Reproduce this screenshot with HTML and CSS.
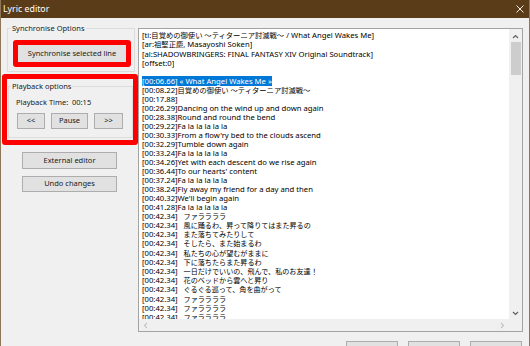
FILE: index.html
```html
<!DOCTYPE html>
<html>
<head>
<meta charset="utf-8">
<link rel="stylesheet" href="styles.css">
</head>
<body>
<div class="window">
  <div class="titlebar">
    <span class="title">Lyric editor</span>
    <svg class="close" width="8" height="8" viewBox="0 0 8 8"><path d="M0.5 0.5L7.5 7.5M7.5 0.5L0.5 7.5" stroke="#fff" stroke-width="0.9" fill="none"/></svg>
  </div>
  <div class="body">
    <div class="main">
      <div class="left">
        <fieldset class="group sync">
          <legend>Synchronise Options</legend>
          <button class="btn sync-btn">Synchronise selected line</button>
        </fieldset>
        <fieldset class="group playback">
          <legend>Playback options</legend>
          <div class="time"><span class="time-label">Playback Time:</span><span>00:15</span></div>
          <div class="controls">
            <button class="btn prev">&lt;&lt;</button>
            <button class="btn pause">Pause</button>
            <button class="btn next">&gt;&gt;</button>
          </div>
        </fieldset>
        <button class="btn wide ext">External editor</button>
        <button class="btn wide undo">Undo changes</button>
        <div class="mark mark1"></div>
        <div class="mark mark2"></div>
      </div>
      <div class="editor">
        <div class="text">
          <div class="ln cjk">[ti:<span class="cj">目覚めの御使い ～ティターニア討滅戦～</span> / What Angel Wakes Me]</div>
          <div class="ln cjk">[ar:<span class="cj">祖堅正慶</span>, Masayoshi Soken]</div>
          <div class="ln">[al:SHADOWBRINGERS: FINAL FANTASY XIV Original Soundtrack]</div>
          <div class="ln">[offset:0]</div>
          <div class="ln">&nbsp;</div>
          <div class="ln"><span class="sel">[00:06.66] « What Angel Wakes Me »</span></div>
          <div class="ln cjk">[00:08.22]<span class="cj">目覚めの御使い ～ティターニア討滅戦～</span></div>
          <div class="ln">[00:17.88]</div>
          <div class="ln">[00:26.29]Dancing on the wind up and down again</div>
          <div class="ln">[00:28.38]Round and round the bend</div>
          <div class="ln">[00:29.22]Fa la la la la la</div>
          <div class="ln">[00:30.33]From a flow'ry bed to the clouds ascend</div>
          <div class="ln">[00:32.29]Tumble down again</div>
          <div class="ln">[00:33.24]Fa la la la la la</div>
          <div class="ln">[00:34.26]Yet with each descent do we rise again</div>
          <div class="ln">[00:36.44]To our hearts' content</div>
          <div class="ln">[00:37.24]Fa la la la la la</div>
          <div class="ln">[00:38.24]Fly away my friend for a day and then</div>
          <div class="ln">[00:40.32]We'll begin again</div>
          <div class="ln">[00:41.28]Fa la la la la la</div>
          <div class="ln jp">[00:42.34]<span class="jt">ファララララ</span></div>
          <div class="ln jp">[00:42.34]<span class="jt">風に踊るわ、昇って降りてはまた昇るの</span></div>
          <div class="ln jp">[00:42.34]<span class="jt">また落ちてみたりして</span></div>
          <div class="ln jp">[00:42.34]<span class="jt">そしたら、また始まるわ</span></div>
          <div class="ln jp">[00:42.34]<span class="jt">私たちの心が望むがままに</span></div>
          <div class="ln jp">[00:42.34]<span class="jt">下に落ちたらまた昇るわ</span></div>
          <div class="ln jp">[00:42.34]<span class="jt">一日だけでいいの、飛んで、私のお友達！</span></div>
          <div class="ln jp">[00:42.34]<span class="jt">花のベッドから雲へと昇り</span></div>
          <div class="ln jp">[00:42.34]<span class="jt">ぐるぐる巡って、角を曲がって</span></div>
          <div class="ln jp">[00:42.34]<span class="jt">ファララララ</span></div>
          <div class="ln jp">[00:42.34]<span class="jt">ファララララ</span></div>
          <div class="ln jp">[00:42.34]<span class="jt">ファララララ</span></div>
        </div>
        <div class="vscroll">
          <svg class="arrow" width="7" height="5" viewBox="0 0 7 5"><path d="M1 4L3.5 1.5L6 4" stroke="#606060" stroke-width="1.2" fill="none"/></svg>
          <div class="thumb"></div>
          <div class="track"></div>
          <svg class="arrow" width="7" height="5" viewBox="0 0 7 5"><path d="M1 1L3.5 3.5L6 1" stroke="#606060" stroke-width="1.2" fill="none"/></svg>
        </div>
        <div class="hscroll">
          <svg class="arrow" width="5" height="7" viewBox="0 0 5 7"><path d="M4 1L1.5 3.5L4 6" stroke="#c2c2c2" stroke-width="1.1" fill="none"/></svg>
          <svg class="arrow" width="5" height="7" viewBox="0 0 5 7"><path d="M1 1L3.5 3.5L1 6" stroke="#c2c2c2" stroke-width="1.1" fill="none"/></svg>
        </div>
        <div class="corner"></div>
      </div>
    </div>
    <div class="bottom">
      <button class="btn bb"></button>
      <button class="btn bb"></button>
      <button class="btn bb"></button>
    </div>
  </div>
</div>
</body>
</html>
```

FILE: styles.css
```css
* { box-sizing: border-box; }
html, body { margin: 0; padding: 0; }
body {
  width: 530px;
  height: 346px;
  overflow: hidden;
  font-family: "Noto Sans", "Noto Sans CJK JP", sans-serif;
  font-size: 7.5px;
  color: #1a1a1a;
  background: #f0f0f0;
}
.window {
  width: 530px;
  height: 346px;
  display: flex;
  flex-direction: column;
  border-left: 1px solid #8c7558;
  border-right: 1px solid #8c7558;
  overflow: hidden;
}
.titlebar {
  height: 18px;
  flex: none;
  background: #5b3c19;
  display: flex;
  align-items: center;
  justify-content: space-between;
  padding: 0 5px 0 2px;
}
.title {
  color: #fff;
  font-size: 8.8px;
  line-height: 10px;
}
.close { display: block; }
.body {
  flex: 1;
  display: flex;
  flex-direction: column;
  background: #f0f0f0;
}
.main {
  display: flex;
  padding-top: 10px;
}
.left {
  position: relative;
  width: 137px;
  flex: none;
  margin-top: -4px;
  display: flex;
  flex-direction: column;
  align-items: flex-start;
}
.group {
  margin: 0;
  border: 1px solid #dcdcdc;
  min-inline-size: 0;
}
.group legend {
  padding: 0 1px;
  line-height: 9px;
  font-size: 7.5px;
  color: #1a1a1a;
}
.sync {
  margin-left: 6px;
  width: 128px;
  padding: 11px 3px 8px 3px;
}
.playback {
  margin-left: 7px;
  margin-top: 10px;
  width: 125px;
  padding: 7px 3px 8px 2px;
}
.btn {
  font-family: inherit;
  font-size: 7.5px;
  color: #1a1a1a;
  background: #e1e1e1;
  border: 1px solid #adadad;
  padding: 0;
  margin: 0;
  line-height: 1;
  display: flex;
  align-items: center;
  justify-content: center;
}
.sync-btn {
  margin-left: 6px;
  width: 110px;
  height: 19px;
}
.time {
  display: flex;
  margin-left: 5px;
  line-height: 9px;
  height: 9px;
}
.time-label { width: 56px; }
.controls {
  display: flex;
  margin-top: 6px;
  margin-left: 6px;
}
.controls .btn { height: 16px; }
.prev { width: 28px; }
.pause { width: 37px; margin-left: 6px; }
.next { width: 29px; margin-left: 6px; }
.wide {
  margin-left: 21px;
  width: 95px;
  height: 17px;
}
.ext { margin-top: 14px; }
.undo { margin-top: 7px; height: 16px; }
.mark {
  position: absolute;
  border: 5px solid #ff0000;
  border-radius: 3px;
}
.mark1 { left: 12px; top: 16px; width: 118px; height: 27px; }
.mark2 { left: 1px; top: 50px; width: 136px; height: 71px; }
.editor {
  width: 385px;
  height: 304px;
  border: 1px solid #a3a3a3;
  display: grid;
  grid-template-columns: 1fr 13px;
  grid-template-rows: 1fr 12px;
  background: #fff;
}
.text {
  overflow: hidden;
  padding: 2px 0 0 3px;
  white-space: nowrap;
  color: #000;
  font-size: 7.7px;
}
.ln {
  line-height: 9px;
  height: 9px;
}
.ln.cjk { height: 9.3px; line-height: 9.3px; }
.cj { font-size: 7.3px; }
.ln.jp { height: 9.2px; line-height: 9.2px; }
.jt { margin-left: 6px; font-size: 7.1px; }
.sel {
  background: #0078d7;
  color: #fff;
}
.vscroll {
  background: #f0f0f0;
  display: flex;
  flex-direction: column;
  align-items: center;
  padding: 5px 0 3px;
}
.vscroll .arrow { flex: none; }
.thumb {
  width: 10px;
  height: 33px;
  background: #cdcdcd;
  margin-top: 3px;
  flex: none;
}
.track { flex: 1; }
.hscroll {
  background: #f0f0f0;
  display: flex;
  align-items: center;
  justify-content: space-between;
  padding: 0 4px 0 4px;
}
.corner { background: #f0f0f0; }
.bottom {
  display: flex;
  justify-content: flex-end;
  padding-right: 7px;
  margin-top: 9px;
}
.bb { width: 52px; height: 20px; flex: none; }
.bb + .bb { margin-left: 10px; }
```
